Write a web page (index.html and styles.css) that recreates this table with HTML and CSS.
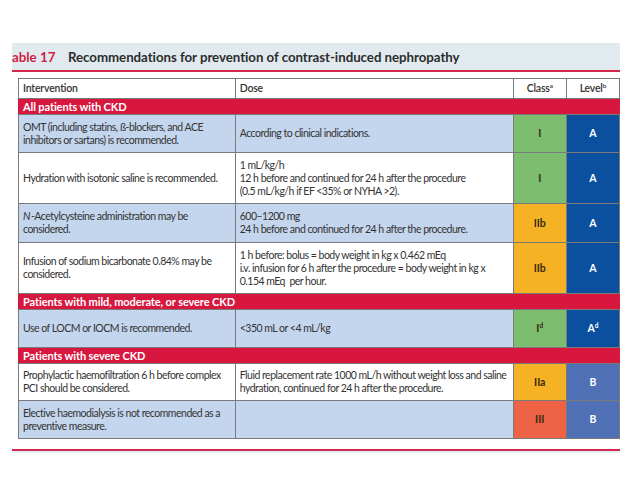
FILE: index.html
```html
<!DOCTYPE html>
<html>
<head>
<meta charset="utf-8">
<link rel="stylesheet" href="styles.css">
</head>
<body>
<div class="page">
  <div class="title-band">
    <span class="tnum">able 17</span><span class="ttext">Recommendations for prevention of contrast-induced nephropathy</span>
  </div>
  <table class="rec">
    <colgroup>
      <col class="c1"><col class="c2"><col class="c3"><col class="c4">
    </colgroup>
    <tr class="head">
      <th class="l">Intervention</th>
      <th class="l">Dose</th>
      <th>Class<sup>a</sup></th>
      <th>Level<sup>b</sup></th>
    </tr>
    <tr class="sec"><td colspan="4">All patients with CKD</td></tr>
    <tr class="h38 blue">
      <td>OMT (including statins, ß-blockers, and ACE inhibitors or sartans) is recommended.</td>
      <td>According to clinical indications.</td>
      <td class="cls green">I</td>
      <td class="lvl a">A</td>
    </tr>
    <tr class="h51">
      <td>Hydration with isotonic saline is recommended.</td>
      <td>1 mL/kg/h<br>12 h before and continued for 24 h after the procedure<br>(0.5 mL/kg/h if EF &lt;35% or NYHA &gt;2).</td>
      <td class="cls green">I</td>
      <td class="lvl a">A</td>
    </tr>
    <tr class="h39 blue">
      <td><span class="it">N</span>-Acetylcysteine administration may be considered.</td>
      <td>600–1200 mg<br>24 h before and continued for 24 h after the procedure.</td>
      <td class="cls orange">IIb</td>
      <td class="lvl a">A</td>
    </tr>
    <tr class="h51">
      <td>Infusion of sodium bicarbonate 0.84% may be considered.</td>
      <td>1 h before: bolus = body weight in kg x 0.462 mEq<br>i.v. infusion for 6 h after the procedure = body weight in kg x 0.154 mEq&nbsp; per hour.</td>
      <td class="cls orange">IIb</td>
      <td class="lvl a">A</td>
    </tr>
    <tr class="sec"><td colspan="4">Patients with mild, moderate, or severe CKD</td></tr>
    <tr class="h38 blue">
      <td>Use of LOCM or IOCM is recommended.</td>
      <td>&lt;350 mL or &lt;4 mL/kg</td>
      <td class="cls green">I<sup>d</sup></td>
      <td class="lvl a">A<sup>d</sup></td>
    </tr>
    <tr class="sec"><td colspan="4">Patients with severe CKD</td></tr>
    <tr class="h37">
      <td>Prophylactic haemofiltration 6 h before complex PCI should be considered.</td>
      <td>Fluid replacement rate 1000 mL/h without weight loss and saline hydration, continued for 24 h after the procedure.</td>
      <td class="cls orange">IIa</td>
      <td class="lvl b">B</td>
    </tr>
    <tr class="h38 blue">
      <td>Elective haemodialysis is not recommended as a preventive measure.</td>
      <td></td>
      <td class="cls redc">III</td>
      <td class="lvl b">B</td>
    </tr>
  </table>
  <div class="foot-line"></div>
</div>
</body>
</html>
```

FILE: styles.css
```css
html, body {
  margin: 0;
  padding: 0;
  background: #ffffff;
}
body {
  font-family: Lato, "Liberation Sans", sans-serif;
  color: #333333;
}
.page {
  width: 638px;
  height: 478px;
  padding-top: 43px;
  box-sizing: border-box;
}
.title-band {
  margin-left: 12px;
  width: 608px;
  height: 29px;
  background: #e1ebef;
  border-bottom: 2px solid #d0294c;
  display: flex;
  align-items: center;
  font-weight: 700;
  font-size: 13.3px;
  box-sizing: border-box;
}
.tnum {
  color: #cf1f44;
  width: 56px;
  flex: none;
}
.ttext {
  color: #2d2d2d;
  letter-spacing: -0.05px;
}
.rec {
  margin-top: 6px;
  margin-left: 18px;
  border-collapse: collapse;
  table-layout: fixed;
  width: 602px;
  font-size: 10.5px;
  letter-spacing: -0.5px;
}
.it {
  font-style: italic;
  letter-spacing: 0;
  padding-right: 0.5px;
}
.c1 { width: 216px; }
.c2 { width: 277px; }
.c3 { width: 53px; }
.c4 { width: 53px; }
.rec td, .rec th {
  padding: 0 4px;
  line-height: 13px;
  border: 1px solid #7a7a7a;
  vertical-align: middle;
  text-align: left;
}
.head th {
  height: 19px;
  font-weight: 600;
  text-align: center;
  background: #ffffff;
  color: #333;
  letter-spacing: -0.2px;
}
.head th.l { text-align: left; }
sup {
  font-size: 6.5px;
  vertical-align: 4px;
  line-height: 0;
}
.sec td {
  background: #d8173f;
  color: #ffffff;
  font-weight: 700;
  font-size: 11px;
  height: 15px;
  padding: 0 4px;
  border-left-color: #d8173f;
  border-right-color: #d8173f;
  letter-spacing: -0.1px;
}
.blue td { background: #c4d6ed; }
.h37 td { height: 36px; }
.h38 td { height: 37px; }
.h39 td { height: 38px; }
.h51 td { height: 50px; }
.rec td.cls {
  text-align: center;
  font-weight: 700;
  color: #3a2a10;
  letter-spacing: 0;
}
.rec td.lvl {
  text-align: center;
  font-weight: 700;
  color: #ffffff;
  letter-spacing: 0;
}
.rec td.green { background: #7cbd6f; }
.rec td.orange { background: #f5b224; }
.rec td.redc { background: #ee6346; }
.rec td.a { background: #0b4f9f; }
.rec td.b { background: #5070b6; }
.foot-line {
  margin-top: 10px;
  margin-left: 12px;
  width: 608px;
  height: 2px;
  background: #d0294c;
  border-bottom: 2px solid #e3eef2;
}
```
